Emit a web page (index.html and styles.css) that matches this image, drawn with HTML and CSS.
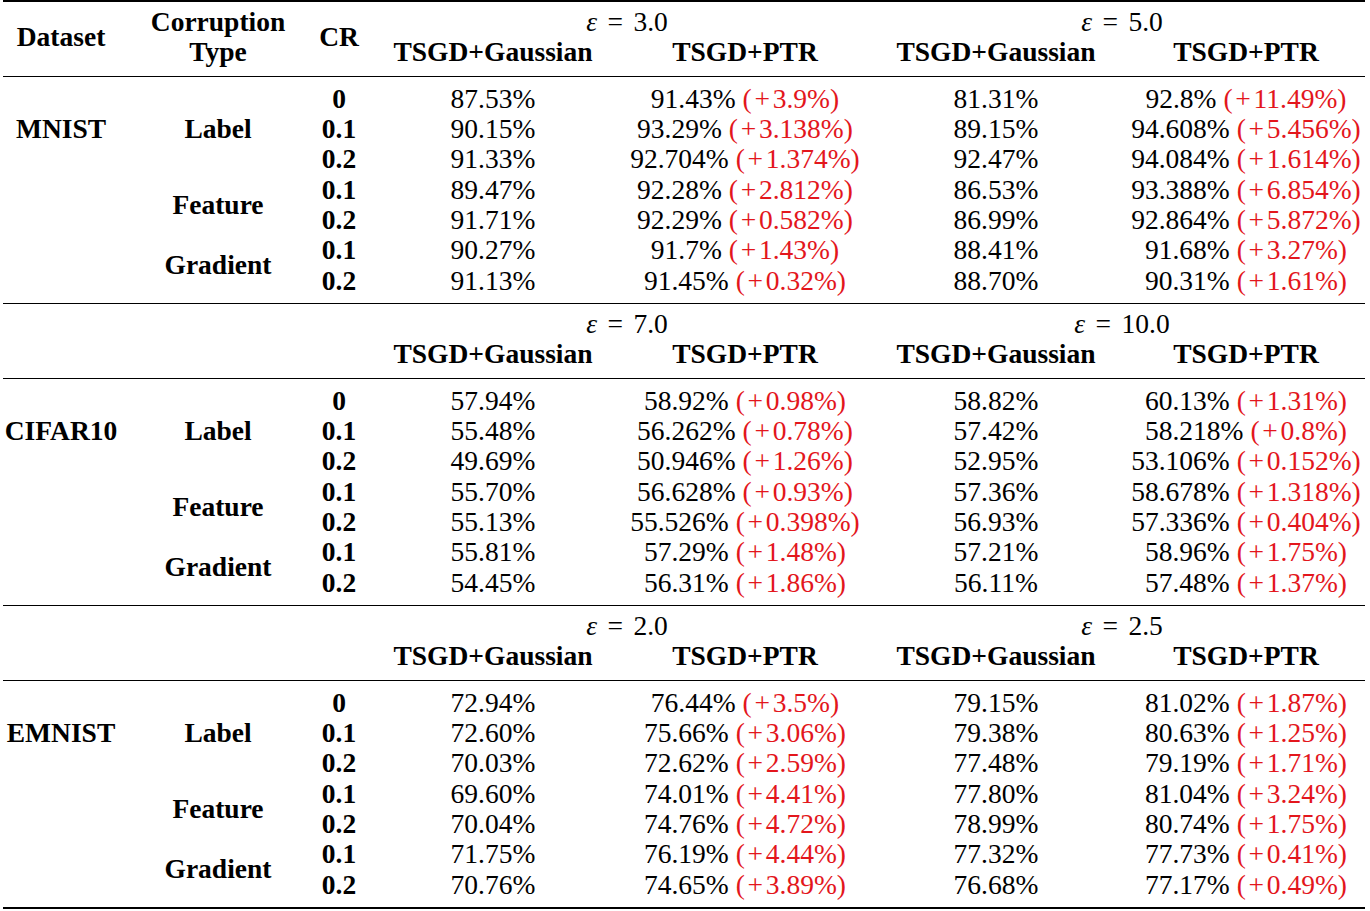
FILE: index.html
```html
<!DOCTYPE html>
<html lang="en">
<head>
<meta charset="utf-8">
<title>Results table</title>
<link rel="stylesheet" href="styles.css">
</head>
<body>
<div class="table">
  <section class="block">
    <div class="head grid">
      <div class="h-ds">Dataset</div>
      <div class="h-ct">Corruption<br>Type</div>
      <div class="h-cr">CR</div>
      <div class="eps eps-a"><i>ε</i><span class="eq">=</span>3.0</div>
      <div class="eps eps-b"><i>ε</i><span class="eq">=</span>5.0</div>
      <div class="hg">TSGD+Gaussian</div>
      <div class="hp">TSGD+PTR</div>
      <div class="hg2">TSGD+Gaussian</div>
      <div class="hp2">TSGD+PTR</div>
    </div>
    <div class="body grid">
      <div class="ds">MNIST</div>
      <div class="ct t-label">Label</div>
      <div class="ct t-feat">Feature</div>
      <div class="ct t-grad">Gradient</div>
      <div class="cr">0</div><div class="g">87.53%</div><div class="p">91.43% <span class="gain">(<span class="pl">+</span>3.9%)</span></div><div class="g2">81.31%</div><div class="p2">92.8% <span class="gain">(<span class="pl">+</span>11.49%)</span></div>
      <div class="cr">0.1</div><div class="g">90.15%</div><div class="p">93.29% <span class="gain">(<span class="pl">+</span>3.138%)</span></div><div class="g2">89.15%</div><div class="p2">94.608% <span class="gain">(<span class="pl">+</span>5.456%)</span></div>
      <div class="cr">0.2</div><div class="g">91.33%</div><div class="p">92.704% <span class="gain">(<span class="pl">+</span>1.374%)</span></div><div class="g2">92.47%</div><div class="p2">94.084% <span class="gain">(<span class="pl">+</span>1.614%)</span></div>
      <div class="cr">0.1</div><div class="g">89.47%</div><div class="p">92.28% <span class="gain">(<span class="pl">+</span>2.812%)</span></div><div class="g2">86.53%</div><div class="p2">93.388% <span class="gain">(<span class="pl">+</span>6.854%)</span></div>
      <div class="cr">0.2</div><div class="g">91.71%</div><div class="p">92.29% <span class="gain">(<span class="pl">+</span>0.582%)</span></div><div class="g2">86.99%</div><div class="p2">92.864% <span class="gain">(<span class="pl">+</span>5.872%)</span></div>
      <div class="cr">0.1</div><div class="g">90.27%</div><div class="p">91.7% <span class="gain">(<span class="pl">+</span>1.43%)</span></div><div class="g2">88.41%</div><div class="p2">91.68% <span class="gain">(<span class="pl">+</span>3.27%)</span></div>
      <div class="cr">0.2</div><div class="g">91.13%</div><div class="p">91.45% <span class="gain">(<span class="pl">+</span>0.32%)</span></div><div class="g2">88.70%</div><div class="p2">90.31% <span class="gain">(<span class="pl">+</span>1.61%)</span></div>
    </div>
  </section>

  <section class="block">
    <div class="head grid">
      <div class="eps eps-a"><i>ε</i><span class="eq">=</span>7.0</div>
      <div class="eps eps-b"><i>ε</i><span class="eq">=</span>10.0</div>
      <div class="hg">TSGD+Gaussian</div>
      <div class="hp">TSGD+PTR</div>
      <div class="hg2">TSGD+Gaussian</div>
      <div class="hp2">TSGD+PTR</div>
    </div>
    <div class="body grid">
      <div class="ds">CIFAR10</div>
      <div class="ct t-label">Label</div>
      <div class="ct t-feat">Feature</div>
      <div class="ct t-grad">Gradient</div>
      <div class="cr">0</div><div class="g">57.94%</div><div class="p">58.92% <span class="gain">(<span class="pl">+</span>0.98%)</span></div><div class="g2">58.82%</div><div class="p2">60.13% <span class="gain">(<span class="pl">+</span>1.31%)</span></div>
      <div class="cr">0.1</div><div class="g">55.48%</div><div class="p">56.262% <span class="gain">(<span class="pl">+</span>0.78%)</span></div><div class="g2">57.42%</div><div class="p2">58.218% <span class="gain">(<span class="pl">+</span>0.8%)</span></div>
      <div class="cr">0.2</div><div class="g">49.69%</div><div class="p">50.946% <span class="gain">(<span class="pl">+</span>1.26%)</span></div><div class="g2">52.95%</div><div class="p2">53.106% <span class="gain">(<span class="pl">+</span>0.152%)</span></div>
      <div class="cr">0.1</div><div class="g">55.70%</div><div class="p">56.628% <span class="gain">(<span class="pl">+</span>0.93%)</span></div><div class="g2">57.36%</div><div class="p2">58.678% <span class="gain">(<span class="pl">+</span>1.318%)</span></div>
      <div class="cr">0.2</div><div class="g">55.13%</div><div class="p">55.526% <span class="gain">(<span class="pl">+</span>0.398%)</span></div><div class="g2">56.93%</div><div class="p2">57.336% <span class="gain">(<span class="pl">+</span>0.404%)</span></div>
      <div class="cr">0.1</div><div class="g">55.81%</div><div class="p">57.29% <span class="gain">(<span class="pl">+</span>1.48%)</span></div><div class="g2">57.21%</div><div class="p2">58.96% <span class="gain">(<span class="pl">+</span>1.75%)</span></div>
      <div class="cr">0.2</div><div class="g">54.45%</div><div class="p">56.31% <span class="gain">(<span class="pl">+</span>1.86%)</span></div><div class="g2">56.11%</div><div class="p2">57.48% <span class="gain">(<span class="pl">+</span>1.37%)</span></div>
    </div>
  </section>

  <section class="block">
    <div class="head grid">
      <div class="eps eps-a"><i>ε</i><span class="eq">=</span>2.0</div>
      <div class="eps eps-b"><i>ε</i><span class="eq">=</span>2.5</div>
      <div class="hg">TSGD+Gaussian</div>
      <div class="hp">TSGD+PTR</div>
      <div class="hg2">TSGD+Gaussian</div>
      <div class="hp2">TSGD+PTR</div>
    </div>
    <div class="body grid">
      <div class="ds">EMNIST</div>
      <div class="ct t-label">Label</div>
      <div class="ct t-feat">Feature</div>
      <div class="ct t-grad">Gradient</div>
      <div class="cr">0</div><div class="g">72.94%</div><div class="p">76.44% <span class="gain">(<span class="pl">+</span>3.5%)</span></div><div class="g2">79.15%</div><div class="p2">81.02% <span class="gain">(<span class="pl">+</span>1.87%)</span></div>
      <div class="cr">0.1</div><div class="g">72.60%</div><div class="p">75.66% <span class="gain">(<span class="pl">+</span>3.06%)</span></div><div class="g2">79.38%</div><div class="p2">80.63% <span class="gain">(<span class="pl">+</span>1.25%)</span></div>
      <div class="cr">0.2</div><div class="g">70.03%</div><div class="p">72.62% <span class="gain">(<span class="pl">+</span>2.59%)</span></div><div class="g2">77.48%</div><div class="p2">79.19% <span class="gain">(<span class="pl">+</span>1.71%)</span></div>
      <div class="cr">0.1</div><div class="g">69.60%</div><div class="p">74.01% <span class="gain">(<span class="pl">+</span>4.41%)</span></div><div class="g2">77.80%</div><div class="p2">81.04% <span class="gain">(<span class="pl">+</span>3.24%)</span></div>
      <div class="cr">0.2</div><div class="g">70.04%</div><div class="p">74.76% <span class="gain">(<span class="pl">+</span>4.72%)</span></div><div class="g2">78.99%</div><div class="p2">80.74% <span class="gain">(<span class="pl">+</span>1.75%)</span></div>
      <div class="cr">0.1</div><div class="g">71.75%</div><div class="p">76.19% <span class="gain">(<span class="pl">+</span>4.44%)</span></div><div class="g2">77.32%</div><div class="p2">77.73% <span class="gain">(<span class="pl">+</span>0.41%)</span></div>
      <div class="cr">0.2</div><div class="g">70.76%</div><div class="p">74.65% <span class="gain">(<span class="pl">+</span>3.89%)</span></div><div class="g2">76.68%</div><div class="p2">77.17% <span class="gain">(<span class="pl">+</span>0.49%)</span></div>
    </div>
  </section>
</div>
</body>
</html>
```

FILE: styles.css
```css
html, body {
  margin: 0;
  padding: 0;
  background: #fff;
}

body {
  font-family: "Liberation Serif", "Times New Roman", serif;
  font-size: 27.5px;
  color: #000;
}

.table {
  width: 1362px;
  margin-left: 3px;
  border-top: 2px solid #000;
  border-bottom: 2px solid #000;
}

.block + .block {
  border-top: 1px solid #000;
}

.grid {
  display: grid;
  grid-template-columns: 116px 198px 44px 264px 240px 262px 238px;
  grid-auto-rows: 30.33px;
  line-height: 30.33px;
  text-align: center;
  white-space: nowrap;
}

.head {
  padding: 5px 0 8px;
  border-bottom: 1px solid #000;
  font-weight: bold;
}

.body {
  padding: 7px 0;
}

/* header cells */
.h-ds { grid-column: 1; grid-row: 1 / span 2; align-self: center; }
.h-ct { grid-column: 2; grid-row: 1 / span 2; align-self: center; }
.h-cr { grid-column: 3; grid-row: 1 / span 2; align-self: center; }

.eps {
  font-weight: normal;
  grid-row: 1;
}
.eps-a { grid-column: 4 / span 2; padding-left: 28px; }
.eps-b { grid-column: 6 / span 2; padding-left: 14px; }

.eq {
  padding: 0 0.38em;
}

.hg  { grid-column: 4; grid-row: 2; }
.hp  { grid-column: 5; grid-row: 2; }
.hg2 { grid-column: 6; grid-row: 2; }
.hp2 { grid-column: 7; grid-row: 2; }

/* body cells */
.ds {
  grid-column: 1;
  grid-row: 1 / span 3;
  align-self: center;
  font-weight: bold;
}

.ct {
  grid-column: 2;
  align-self: center;
  font-weight: bold;
}
.t-label { grid-row: 1 / span 3; }
.t-feat  { grid-row: 4 / span 2; }
.t-grad  { grid-row: 6 / span 2; }

.cr { grid-column: 3; font-weight: bold; }
.g  { grid-column: 4; }
.p  { grid-column: 5; }
.g2 { grid-column: 6; }
.p2 { grid-column: 7; }

.gain {
  color: #e3161c;
}

.pl {
  padding: 0 0.1em;
}
```
